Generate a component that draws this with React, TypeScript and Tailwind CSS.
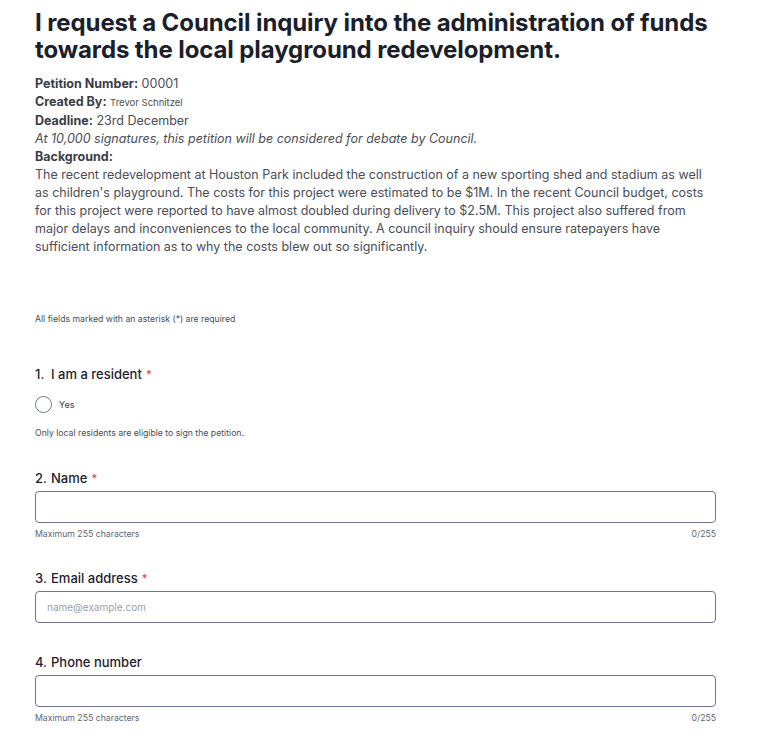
import React from "react";

const font = { fontFamily: "Inter, 'Noto Sans', sans-serif" };

function Req() {
  return <span className="text-[#d64545] ml-1 text-[11px] align-top">*</span>;
}

function Label({ n, text, req }: { n: number; text: string; req?: boolean }) {
  return (
    <div className="text-[13px] font-medium text-[#1e2230] leading-[18px] flex items-start">
      <span className="w-[16px]">{n}.</span>
      <span>{text}</span>
      {req && <Req />}
    </div>
  );
}

function TextField({ placeholder, counter }: { placeholder?: string; counter?: boolean }) {
  return (
    <div>
      <input
        className="block w-full h-[32px] rounded-[4px] border border-[#6b778c] px-[11px] text-[10px] text-[#333] placeholder:text-[#9aa0aa] outline-none"
        placeholder={placeholder}
      />
      {counter && (
        <div className="flex justify-between mt-[5px] text-[8.7px] text-[#5f6673] leading-[12px]">
          <span>Maximum 255 characters</span>
          <span>0/255</span>
        </div>
      )}
    </div>
  );
}

export default function App() {
  return (
    <div style={font} className="bg-white w-[760px] min-h-[742px] pl-[35px] pr-[44px] pt-[9px]">
      <h1 className="text-[24px] font-bold leading-[27px] text-[#1b1e2b] tracking-[-0.1px]">
        I request a Council inquiry into the administration of funds towards the local playground redevelopment.
      </h1>

      <div className="mt-[12px] text-[12.5px] leading-[18px] text-[#4a4d57]">
        <div>
          <span className="font-bold text-[#3a3d47]">Petition Number:</span> 00001
        </div>
        <div>
          <span className="font-bold text-[#3a3d47]">Created By:</span>{" "}
          <span className="text-[9.5px]">Trevor Schnitzel</span>
        </div>
        <div>
          <span className="font-bold text-[#3a3d47]">Deadline:</span> 23rd December
        </div>
        <div className="italic">At 10,000 signatures, this petition will be considered for debate by Council.</div>
        <div className="font-bold text-[#3a3d47]">Background:</div>
        <p>
          The recent redevelopment at Houston Park included the construction of a new sporting shed and stadium as well
          as children's playground. The costs for this project were estimated to be $1M. In the recent Council budget,
          costs for this project were reported to have almost doubled during delivery to $2.5M. This project also
          suffered from major delays and inconveniences to the local community. A council inquiry should ensure
          ratepayers have sufficient information as to why the costs blew out so significantly.
        </p>
      </div>

      <div className="mt-[57px] text-[8.7px] text-[#4a4d57] leading-[12px]">
        All fields marked with an asterisk (*) are required
      </div>

      <div className="mt-[40px]">
        <Label n={1} text="I am a resident" req />
        <label className="flex items-center gap-[7px] mt-[13px]">
          <span className="w-[17px] h-[17px] rounded-full border border-[#6b778c] bg-white" />
          <span className="text-[9px] text-[#3a3d47]">Yes</span>
        </label>
        <div className="mt-[14px] text-[8.7px] text-[#4a4d57] leading-[12px]">
          Only local residents are eligible to sign the petition.
        </div>
      </div>

      <div className="mt-[30px]">
        <Label n={2} text="Name" req />
        <div className="mt-[4px]">
          <TextField counter />
        </div>
      </div>

      <div className="mt-[29px]">
        <Label n={3} text="Email address" req />
        <div className="mt-[4px]">
          <TextField placeholder="name@example.com" />
        </div>
      </div>

      <div className="mt-[30px]">
        <Label n={4} text="Phone number" />
        <div className="mt-[4px]">
          <TextField counter />
        </div>
      </div>
    </div>
  );
}
